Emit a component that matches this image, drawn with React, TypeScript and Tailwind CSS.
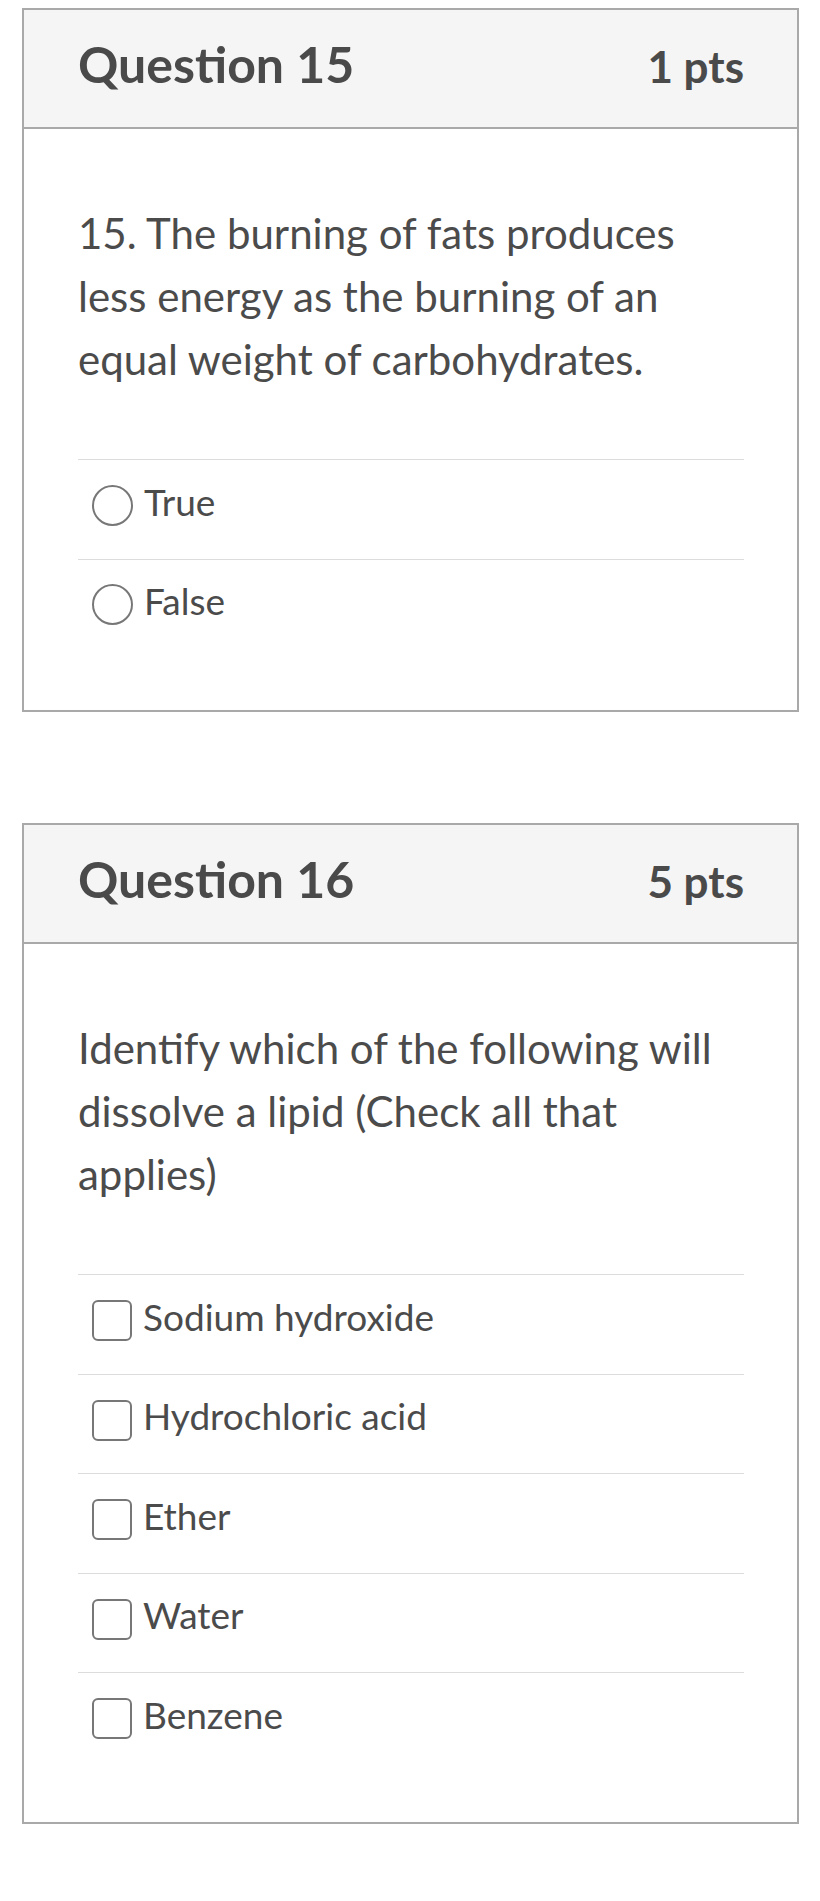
import React from "react";

type Q = {
  title: string;
  pts: string;
  text: string;
  kind: "radio" | "checkbox";
  options: string[];
};

const questions: Q[] = [
  {
    title: "Question 15",
    pts: "1 pts",
    text: "15. The burning of fats produces less energy as the burning of an equal weight of carbohydrates.",
    kind: "radio",
    options: ["True", "False"],
  },
  {
    title: "Question 16",
    pts: "5 pts",
    text: "Identify which of the following will dissolve a lipid (Check all that applies)",
    kind: "checkbox",
    options: ["Sodium hydroxide", "Hydrochloric acid", "Ether", "Water", "Benzene"],
  },
];

function Card({ q, last }: { q: Q; last?: boolean }) {
  return (
    <div className="ml-[22px] mr-[21px] border-2 border-[#a9a9a9] bg-white">
      <div className="flex justify-between items-start bg-[#f5f5f5] border-b-2 border-[#a9a9a9] pl-[54px] pr-[53px] pt-[24px] pb-[33px]">
        <span className="text-[50px] leading-[60px] font-bold text-[#4a4a4a]">{q.title}</span>
        <span className="text-[44px] leading-[55px] pt-[5px] font-bold text-[#4a4a4a]">{q.pts}</span>
      </div>
      <div className={last ? "pl-[54px] pr-[53px] pt-[73px] pb-[50px]" : "pl-[54px] pr-[53px] pt-[73px] pb-[52px]"}>
        <p className="text-[42px] leading-[63px] text-[#4b4b4b] mb-[68px]">{q.text}</p>
        <div>
          {q.options.map((o) => (
            <div
              key={o}
              className="flex items-start h-[99.5px] border-t-[1.5px] border-[#dcdcdc] pt-[18.5px] pl-[14px]"
            >
              {q.kind === "radio" ? (
                <span className="mt-[6px] w-[41px] h-[41px] rounded-full border-2 border-[#777777] bg-white shrink-0" />
              ) : (
                <span className="mt-[6.5px] w-[40px] h-[41px] rounded-[6px] border-2 border-[#777777] bg-white shrink-0" />
              )}
              <span className="ml-[11px] text-[37px] leading-[45px] text-[#4b4b4b]">{o}</span>
            </div>
          ))}
        </div>
      </div>
    </div>
  );
}

export default function App() {
  return (
    <div
      className="w-[820px] min-h-[1901px] bg-white pt-[8px]"
      style={{ fontFamily: "Lato, 'Noto Sans', sans-serif" }}
    >
      <Card q={questions[0]} />
      <div className="h-[111px]" />
      <Card q={questions[1]} last />
    </div>
  );
}
